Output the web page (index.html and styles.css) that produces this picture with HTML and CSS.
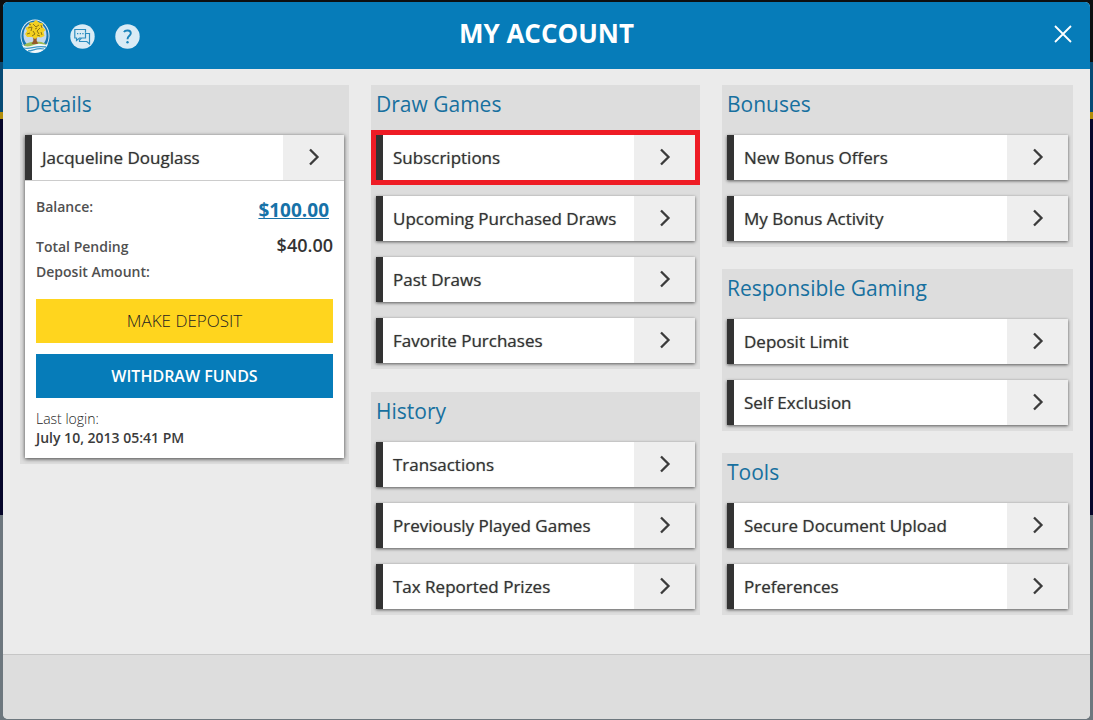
FILE: index.html
```html
<!DOCTYPE html>
<html lang="en">
<head>
    <meta charset="UTF-8">
    <meta name="viewport" content="width=device-width, initial-scale=1.0">
    <title>My Account</title>
    <link rel="stylesheet" href="styles.css">
</head>
<body>
    <!-- shared icons -->
    <svg class="sprite" aria-hidden="true">
        <symbol id="chevron" viewBox="0 0 12 18">
            <path d="M2.500 1.500L10 9L2.500 16.500" fill="none" stroke="#3b3b3b" stroke-width="2.3"/>
        </symbol>
    </svg>

    <div class="account">
        <header class="account-header">
            <nav class="header-links">
                <a href="#" aria-label="Home">
                    <svg class="logo" viewBox="0 0 30 34">
                        <ellipse cx="15" cy="17" rx="14.500" ry="16.500" fill="#e4eff6"/>
                        <ellipse cx="15" cy="17" rx="13.600" ry="15.600" fill="#1675b3"/>
                        <ellipse cx="15" cy="16" rx="11.500" ry="13" fill="#c3d8ef"/>
                        <path d="M4 26C9 22 20 21 26 25L23 29L7 30Z" fill="#9dbb55"/>
                        <path d="M13.300 15H16.700V22L18.500 25H11.500L13.300 22Z" fill="#96582a"/>
                        <path d="M7 18L5 15L7 12L5.500 9L9 7L9.500 3.500L13 3.500L16 1L19 3.500L23 4.500L22.500 8L25.500 11L23.500 13L24.500 17L21 18.500L18 18L15 20L12 18Z" fill="#f3d021"/>
                        <path d="M8 9L12 8L11 12M13 5L16 8L19 6M20 9L17 12L19 15M13 12L15 15L12 17M7 15L10 14M21 13L22 16M15 10L17 9M9 5L11 6M21 6L22 9M17 16L20 17" fill="none" stroke="#8d7415" stroke-width="1"/>
                        <path d="M1.500 25C7 30 12 26 17 25C22 24 25 27 28 25C26 31 20 34 15 34C9 34 4 31 1.500 25Z" fill="#f2f8fb"/>
                        <path d="M4 29C10 31 15 26 26 28M8 32C13 32 17 28 24 30" fill="none" stroke="#3c98c8" stroke-width="1.300"/>
                    </svg>
                </a>
                <a href="#" aria-label="Messages">
                    <svg class="round-icon" viewBox="0 0 25 25">
                        <circle cx="12.500" cy="12.500" r="12.200" fill="#d9ebf5"/>
                        <g fill="none" stroke="#2c8dc0" stroke-width="1.200">
                            <path d="M15.500 8.500V5.500H4.800V14H6.500V16.500L9.500 14H11"/>
                            <path d="M16 9.500H19.500V20L16.800 17.500H9.500V16L11.500 14H15.500V8.500"/>
                        </g>
                        <path d="M7 9h1.300v1.300H7zM9.700 9H11v1.300H9.700zM12.300 9h1.300v1.300h-1.300z" fill="#2c8dc0"/>
                    </svg>
                </a>
                <a href="#" aria-label="Help">
                    <svg class="round-icon" viewBox="0 0 25 25">
                        <circle cx="12.500" cy="12.500" r="12.200" fill="#d9ebf5"/>
                        <path d="M9 8.200C10 5.800 15.800 5.600 15.800 9.300C15.800 11.800 12.500 11.700 12.500 15.200" fill="none" stroke="#1b84bb" stroke-width="1.900"/>
                        <circle cx="12.500" cy="18.200" r="1.200" fill="#1b84bb"/>
                    </svg>
                </a>
            </nav>
            <h1>MY ACCOUNT</h1>
            <button type="button" class="close" aria-label="Close">
                <svg viewBox="0 0 18 18"><path d="M1 1L17 17M17 1L1 17" stroke="#fff" stroke-width="1.800"/></svg>
            </button>
        </header>

        <main class="columns">
            <div class="column">
                <section class="panel">
                    <h2>Details</h2>
                    <div class="card">
                        <a href="#" class="item"><span>Jacqueline Douglass</span><svg><use href="#chevron"/></svg></a>
                        <div class="card-body">
                            <div class="row balance">
                                <span>Balance:</span>
                                <a href="#">$100.00</a>
                            </div>
                            <div class="row pending">
                                <span>Total Pending<br>Deposit Amount:</span>
                                <strong>$40.00</strong>
                            </div>
                            <button type="button" class="btn deposit">MAKE DEPOSIT</button>
                            <button type="button" class="btn withdraw">WITHDRAW FUNDS</button>
                            <p class="login">Last login:<br><b>July 10, 2013 05:41 PM</b></p>
                        </div>
                    </div>
                </section>
            </div>

            <div class="column">
                <section class="panel">
                    <h2>Draw Games</h2>
                    <a href="#" class="item selected"><span>Subscriptions</span><svg><use href="#chevron"/></svg></a>
                    <a href="#" class="item"><span>Upcoming Purchased Draws</span><svg><use href="#chevron"/></svg></a>
                    <a href="#" class="item"><span>Past Draws</span><svg><use href="#chevron"/></svg></a>
                    <a href="#" class="item"><span>Favorite Purchases</span><svg><use href="#chevron"/></svg></a>
                </section>
                <section class="panel">
                    <h2>History</h2>
                    <a href="#" class="item"><span>Transactions</span><svg><use href="#chevron"/></svg></a>
                    <a href="#" class="item"><span>Previously Played Games</span><svg><use href="#chevron"/></svg></a>
                    <a href="#" class="item"><span>Tax Reported Prizes</span><svg><use href="#chevron"/></svg></a>
                </section>
            </div>

            <div class="column">
                <section class="panel">
                    <h2>Bonuses</h2>
                    <a href="#" class="item"><span>New Bonus Offers</span><svg><use href="#chevron"/></svg></a>
                    <a href="#" class="item"><span>My Bonus Activity</span><svg><use href="#chevron"/></svg></a>
                </section>
                <section class="panel">
                    <h2>Responsible Gaming</h2>
                    <a href="#" class="item"><span>Deposit Limit</span><svg><use href="#chevron"/></svg></a>
                    <a href="#" class="item"><span>Self Exclusion</span><svg><use href="#chevron"/></svg></a>
                </section>
                <section class="panel">
                    <h2>Tools</h2>
                    <a href="#" class="item"><span>Secure Document Upload</span><svg><use href="#chevron"/></svg></a>
                    <a href="#" class="item"><span>Preferences</span><svg><use href="#chevron"/></svg></a>
                </section>
            </div>
        </main>

        <footer class="account-footer"></footer>
    </div>
</body>
</html>
```
FILE: styles.css
```css
* {
    box-sizing: border-box;
}
body {
    margin: 0;
    padding: 2px 3px 1px;
    font-family: "Open Sans", "Noto Sans", sans-serif;
    color: #3b3b3b;
    background: linear-gradient(#0d0f10 62px, #064a75 62px, #064a75 112px, #b08d0c 112px, #b08d0c 119px, #06062a 119px, #06062a 515px, #6d777e 515px);
}
.sprite {
    display: none;
}
.account {
    display: flex;
    flex-direction: column;
    min-height: calc(100vh - 3px);
    background-color: #ebebeb;
    border-radius: 5px;
    overflow: hidden;
}
.account-header {
    display: grid;
    grid-template-columns: 1fr auto 1fr;
    align-items: center;
    height: 67px;
    padding: 0 17px;
    background-color: #067cb9;
}
.header-links {
    display: flex;
    align-items: center;
    gap: 20px;
    padding-top: 1px;
}
.header-links svg,
.close svg {
    display: block;
}
.logo {
    width: 30px;
    height: 34px;
}
.round-icon {
    width: 25px;
    height: 25px;
}
h1 {
    margin: 0;
    padding-bottom: 6px;
    font-size: 26px;
    line-height: 36px;
    font-weight: 700;
    color: #fff;
}
.close {
    justify-self: end;
    padding: 0 1px 4px 0;
    border: none;
    background: none;
    cursor: pointer;
}
.close svg {
    width: 18px;
    height: 18px;
}
.columns {
    flex: 1;
    display: grid;
    grid-template-columns: 329fr 329fr 351fr;
    gap: 22px;
    align-content: start;
    padding: 16px 17px 39px;
}
.column {
    display: flex;
    flex-direction: column;
    justify-content: space-between;
    gap: 22px;
}
.panel {
    display: flex;
    flex-direction: column;
    gap: 16px;
    padding: 5px 5px 6px;
    background-color: #ddd;
}
h2 {
    margin: 0 0 1px;
    font-size: 21px;
    line-height: 28px;
    font-weight: 400;
    color: #17709f;
}
.item {
    display: flex;
    align-items: center;
    height: 45px;
    padding-left: 10px;
    border-left: 7px solid #333;
    background-color: #fff;
    box-shadow: 0 1px 3px rgba(0, 0, 0, 0.6);
    font-size: 17px;
    color: #333;
    text-decoration: none;
    text-shadow: 0 0 1px rgba(51, 51, 51, 0.6);
}
.item span {
    flex: 1;
}
.item svg {
    width: 61px;
    height: 45px;
    padding: 13px 0 14px;
    background-color: #eee;
}
.item.selected {
    outline: 5px solid #ee1c25;
}
.card {
    background-color: #fff;
    box-shadow: 0 1px 4px rgba(0, 0, 0, 0.7);
}
.card .item {
    box-shadow: 0 1px 0 #ccc;
}
.card-body {
    padding: 14px 11px 11px;
}
.row {
    display: flex;
    justify-content: space-between;
    font-size: 14px;
    line-height: 25px;
    font-weight: 600;
    color: #505050;
}
.balance {
    padding-right: 4px;
    margin-bottom: 10px;
}
.balance a {
    font-size: 19px;
    line-height: 32px;
    height: 30px;
    font-weight: 700;
    color: #1672a8;
}
.pending strong {
    font-size: 18px;
    line-height: 23px;
    font-weight: 600;
    color: #333;
}
.btn {
    display: block;
    width: 100%;
    height: 44px;
    margin-top: 11px;
    padding-bottom: 2px;
    border: none;
    font-family: inherit;
    font-size: 17px;
    cursor: pointer;
}
.deposit {
    margin-top: 15px;
    background-color: #ffd51e;
    color: #222;
    font-weight: 300;
}
.withdraw {
    background-color: #067cb9;
    color: #fff;
    font-size: 16px;
    font-weight: 600;
}
.login {
    margin: 11px 0 0;
    font-size: 14px;
    line-height: 19px;
    font-weight: 300;
    color: #222;
}
.login b {
    font-weight: 600;
    color: #3b3b3b;
}
.account-footer {
    height: 65px;
    border-top: 1px solid #c6c6c6;
    background-color: #ddd;
}
```
